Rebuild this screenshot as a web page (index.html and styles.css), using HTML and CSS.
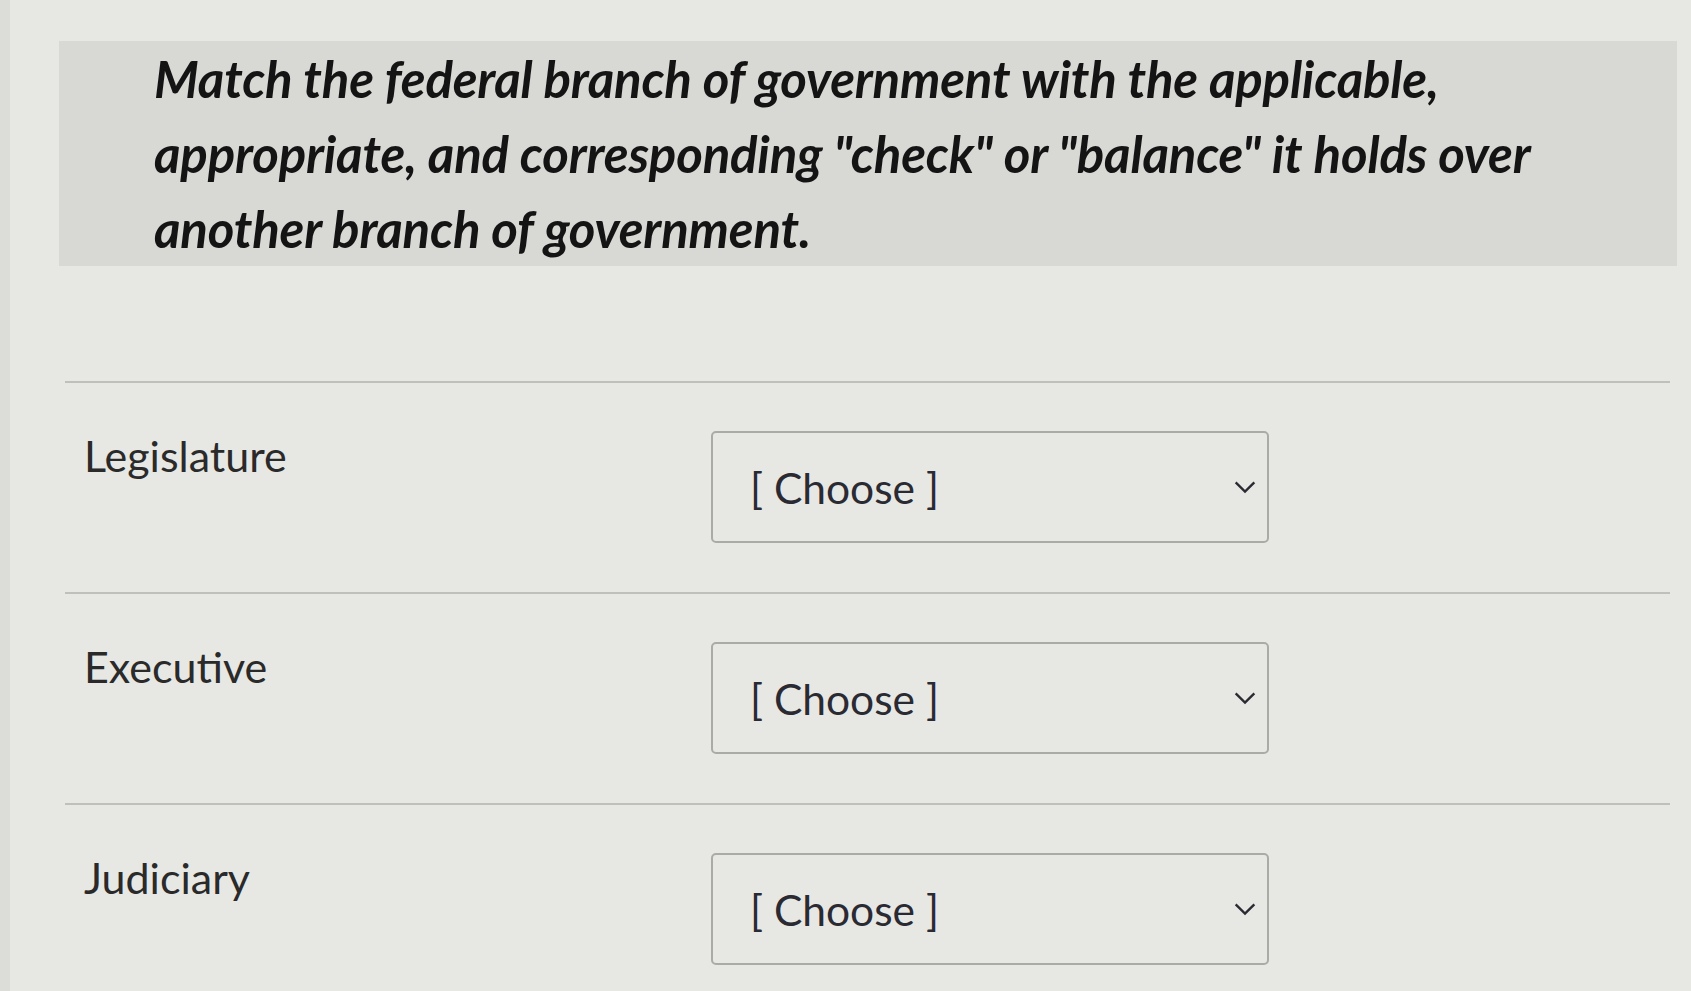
FILE: index.html
```html
<!DOCTYPE html>
<html>
<head>
<meta charset="utf-8">
<link rel="stylesheet" href="styles.css">
</head>
<body>
<div class="page">
  <div class="question">
    <p>Match the federal branch of government with the applicable,<br>appropriate, and corresponding "check" or "balance" it holds over<br>another branch of government.</p>
  </div>
  <div class="answers">
    <div class="row">
      <div class="label">Legislature</div>
      <div class="select"><span>[ Choose ]</span><svg class="chev" viewBox="0 0 24 24"><path d="M4 8 L12 16 L20 8"/></svg></div>
    </div>
    <div class="row">
      <div class="label">Executive</div>
      <div class="select"><span>[ Choose ]</span><svg class="chev" viewBox="0 0 24 24"><path d="M4 8 L12 16 L20 8"/></svg></div>
    </div>
    <div class="row">
      <div class="label">Judiciary</div>
      <div class="select"><span>[ Choose ]</span><svg class="chev" viewBox="0 0 24 24"><path d="M4 8 L12 16 L20 8"/></svg></div>
    </div>
  </div>
</div>
</body>
</html>
```
FILE: styles.css
```css
html, body {
  margin: 0;
  padding: 0;
  height: 100%;
  background: #e7e7e4;
  font-family: Lato, "Open Sans", sans-serif;
}
.page {
  height: 991px;
  overflow: hidden;
  padding-left: 59px;
  padding-top: 41px;
  box-sizing: border-box;
  border-left: 10px solid #dcdcd9;
}
.question {
  width: 1618px;
  height: 225px;
  background: #d8d8d5;
  box-sizing: border-box;
  padding: 0 20px 0 95px;
  margin-left: -10px;
}
.question p {
  margin: 0;
  font-weight: 700;
  font-style: italic;
  font-size: 51px;
  line-height: 75px;
  color: #141414;
  letter-spacing: -0.2px;
  white-space: nowrap;
}
.answers {
  margin-top: 115px;
  margin-left: -4px;
  width: 1605px;
}
.row {
  display: grid;
  grid-template-columns: 646px 558px;
  align-items: start;
  border-top: 2px solid #bfbfbc;
  padding: 48px 0 49px 0;
}
.label {
  padding-left: 19px;
  font-size: 43px;
  color: #2a2a2a;
  line-height: 52px;
  position: relative;
  top: -1px;
}
.select {
  height: 112px;
  box-sizing: border-box;
  border: 2px solid #aaaaa7;
  border-radius: 5px;
  display: flex;
  align-items: center;
  justify-content: space-between;
  padding: 0 8px 0 37px;
  font-size: 42.5px;
  color: #2a2a33;
}
.chev {
  width: 28px;
  height: 28px;
  fill: none;
  stroke: #2a2a33;
  stroke-width: 2;
}
```
